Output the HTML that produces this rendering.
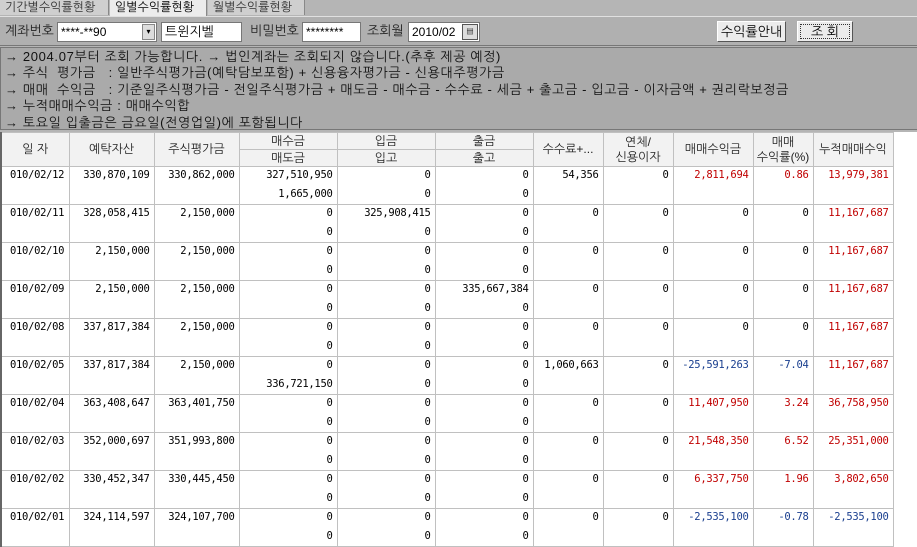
<!DOCTYPE html>
<html><head><meta charset="utf-8"><style>
*{margin:0;padding:0;box-sizing:border-box}
body{width:917px;height:542px;overflow:hidden;background:#fff;font-family:"Liberation Sans","NanumGothic","Noto Sans CJK KR",sans-serif;font-size:12px;color:#000;position:relative}
.abs{position:absolute}
#top{left:0;top:0;width:917px;height:132px;background:#b5b5b5}
.tab{position:absolute;top:0;height:15px;font-size:12px;line-height:14px;padding:0 5px;background:#cfcfcf;border-right:1px solid #888;color:#333}
.tab.on{background:#ececec;height:16px;color:#000}
#form{left:0;top:16px;width:917px;height:30px;background:#b0b0b0;border-top:1px solid #e0e0e0;border-bottom:1px solid #777}
.lbl{position:absolute;top:6px;font-size:13px;color:#222}
.inp{position:absolute;top:5px;height:20px;background:#fff;border:1px solid #777;font-size:12px;line-height:18px;padding-left:3px}
.btn{position:absolute;top:4px;height:21px;background:#ececec;border:1px solid #fff;border-right-color:#555;border-bottom-color:#555;font-size:13px;text-align:center;line-height:19px}
#info{left:0;top:47px;width:917px;height:83px;background:#aaa;border:1px solid #777;border-right:none;padding:1px 0 0 4px;font-size:13px;line-height:16.4px;color:#111;white-space:pre;letter-spacing:0.65px}
table{position:absolute;left:0;top:132px;border-collapse:collapse;table-layout:fixed;width:892px}
td{border-right:1px solid #c0c0c0;height:19px;padding:0 4px 0 0;text-align:right;vertical-align:top;font-family:"DejaVu Sans Mono","Liberation Mono",monospace;font-size:10.5px;line-height:17px;white-space:nowrap;overflow:hidden;letter-spacing:-0.3px}
td.d{border-left:2px solid #666;text-align:left;padding-left:8px}
tr.b td,td.s{border-bottom:1px solid #c0c0c0}
th{background:#f2f2f2;border:1px solid #c0c0c0;font-weight:normal;font-size:12px;height:17px;line-height:15px;color:#222}
th.f{border-left:2px solid #666}
.r{color:#c00000}.bl{color:#1a3f8f}
</style></head><body>
<div id="top" class="abs"></div>
<div class="tab" style="left:0;width:109px">기간별수익률현황</div>
<div class="tab on" style="left:110px;width:97px">일별수익률현황</div>
<div class="tab" style="left:208px;width:97px">월별수익률현황</div>
<div id="form" class="abs">
<span class="lbl" style="left:5px">계좌번호</span>
<div class="inp" style="left:57px;width:100px">****-**90<span style="position:absolute;right:1px;top:1px;width:13px;height:16px;background:#ddd;border:1px solid #888;font-size:8px;line-height:14px;text-align:center">▾</span></div>
<div class="inp" style="left:161px;width:81px;font-size:13px">트윈지벨</div>
<span class="lbl" style="left:250px">비밀번호</span>
<div class="inp" style="left:302px;width:59px">********</div>
<span class="lbl" style="left:367px">조회월</span>
<div class="inp" style="left:408px;width:72px">2010/02<span style="position:absolute;right:1px;top:1px;width:16px;height:16px;background:#ddd;border:1px solid #555;font-size:8px;line-height:14px;text-align:center">▤</span></div>
<div class="btn" style="left:717px;width:69px">수익률안내</div>
<div class="btn" style="left:797px;width:56px;outline:1px dotted #333;outline-offset:-4px">조 회</div>
</div>
<div id="info" class="abs">→ 2004.07부터 조회 가능합니다. → 법인계좌는 조회되지 않습니다.(추후 제공 예정)
→ 주식  평가금   : 일반주식평가금(예탁담보포함) + 신용융자평가금 - 신용대주평가금
→ 매매  수익금   : 기준일주식평가금 - 전일주식평가금 + 매도금 - 매수금 - 수수료 - 세금 + 출고금 - 입고금 - 이자금액 + 권리락보정금
→ 누적매매수익금 : 매매수익합
→ 토요일 입출금은 금요일(전영업일)에 포함됩니다</div>
<table>
<colgroup><col style="width:68px"><col style="width:85px"><col style="width:85px"><col style="width:98px"><col style="width:98px"><col style="width:98px"><col style="width:70px"><col style="width:70px"><col style="width:80px"><col style="width:60px"><col style="width:80px"></colgroup>
<tr><th rowspan="2" class="f">일 자</th><th rowspan="2">예탁자산</th><th rowspan="2">주식평가금</th><th>매수금</th><th>입금</th><th>출금</th><th rowspan="2">수수료+...</th><th rowspan="2">연체/<br>신용이자</th><th rowspan="2">매매수익금</th><th rowspan="2">매매<br>수익률(%)</th><th rowspan="2">누적매매수익</th></tr>
<tr><th>매도금</th><th>입고</th><th>출고</th></tr>
<tr><td rowspan="2" class="d s">010/02/12</td><td rowspan="2" class="s">330,870,109</td><td rowspan="2" class="s">330,862,000</td><td>327,510,950</td><td>0</td><td>0</td><td rowspan="2" class="s">54,356</td><td rowspan="2" class="s">0</td><td rowspan="2" class="r s">2,811,694</td><td rowspan="2" class="r s">0.86</td><td rowspan="2" class="r s">13,979,381</td></tr>
<tr class="b"><td>1,665,000</td><td>0</td><td>0</td></tr>
<tr><td rowspan="2" class="d s">010/02/11</td><td rowspan="2" class="s">328,058,415</td><td rowspan="2" class="s">2,150,000</td><td>0</td><td>325,908,415</td><td>0</td><td rowspan="2" class="s">0</td><td rowspan="2" class="s">0</td><td rowspan="2" class="s">0</td><td rowspan="2" class="s">0</td><td rowspan="2" class="r s">11,167,687</td></tr>
<tr class="b"><td>0</td><td>0</td><td>0</td></tr>
<tr><td rowspan="2" class="d s">010/02/10</td><td rowspan="2" class="s">2,150,000</td><td rowspan="2" class="s">2,150,000</td><td>0</td><td>0</td><td>0</td><td rowspan="2" class="s">0</td><td rowspan="2" class="s">0</td><td rowspan="2" class="s">0</td><td rowspan="2" class="s">0</td><td rowspan="2" class="r s">11,167,687</td></tr>
<tr class="b"><td>0</td><td>0</td><td>0</td></tr>
<tr><td rowspan="2" class="d s">010/02/09</td><td rowspan="2" class="s">2,150,000</td><td rowspan="2" class="s">2,150,000</td><td>0</td><td>0</td><td>335,667,384</td><td rowspan="2" class="s">0</td><td rowspan="2" class="s">0</td><td rowspan="2" class="s">0</td><td rowspan="2" class="s">0</td><td rowspan="2" class="r s">11,167,687</td></tr>
<tr class="b"><td>0</td><td>0</td><td>0</td></tr>
<tr><td rowspan="2" class="d s">010/02/08</td><td rowspan="2" class="s">337,817,384</td><td rowspan="2" class="s">2,150,000</td><td>0</td><td>0</td><td>0</td><td rowspan="2" class="s">0</td><td rowspan="2" class="s">0</td><td rowspan="2" class="s">0</td><td rowspan="2" class="s">0</td><td rowspan="2" class="r s">11,167,687</td></tr>
<tr class="b"><td>0</td><td>0</td><td>0</td></tr>
<tr><td rowspan="2" class="d s">010/02/05</td><td rowspan="2" class="s">337,817,384</td><td rowspan="2" class="s">2,150,000</td><td>0</td><td>0</td><td>0</td><td rowspan="2" class="s">1,060,663</td><td rowspan="2" class="s">0</td><td rowspan="2" class="bl s">-25,591,263</td><td rowspan="2" class="bl s">-7.04</td><td rowspan="2" class="r s">11,167,687</td></tr>
<tr class="b"><td>336,721,150</td><td>0</td><td>0</td></tr>
<tr><td rowspan="2" class="d s">010/02/04</td><td rowspan="2" class="s">363,408,647</td><td rowspan="2" class="s">363,401,750</td><td>0</td><td>0</td><td>0</td><td rowspan="2" class="s">0</td><td rowspan="2" class="s">0</td><td rowspan="2" class="r s">11,407,950</td><td rowspan="2" class="r s">3.24</td><td rowspan="2" class="r s">36,758,950</td></tr>
<tr class="b"><td>0</td><td>0</td><td>0</td></tr>
<tr><td rowspan="2" class="d s">010/02/03</td><td rowspan="2" class="s">352,000,697</td><td rowspan="2" class="s">351,993,800</td><td>0</td><td>0</td><td>0</td><td rowspan="2" class="s">0</td><td rowspan="2" class="s">0</td><td rowspan="2" class="r s">21,548,350</td><td rowspan="2" class="r s">6.52</td><td rowspan="2" class="r s">25,351,000</td></tr>
<tr class="b"><td>0</td><td>0</td><td>0</td></tr>
<tr><td rowspan="2" class="d s">010/02/02</td><td rowspan="2" class="s">330,452,347</td><td rowspan="2" class="s">330,445,450</td><td>0</td><td>0</td><td>0</td><td rowspan="2" class="s">0</td><td rowspan="2" class="s">0</td><td rowspan="2" class="r s">6,337,750</td><td rowspan="2" class="r s">1.96</td><td rowspan="2" class="r s">3,802,650</td></tr>
<tr class="b"><td>0</td><td>0</td><td>0</td></tr>
<tr><td rowspan="2" class="d s">010/02/01</td><td rowspan="2" class="s">324,114,597</td><td rowspan="2" class="s">324,107,700</td><td>0</td><td>0</td><td>0</td><td rowspan="2" class="s">0</td><td rowspan="2" class="s">0</td><td rowspan="2" class="bl s">-2,535,100</td><td rowspan="2" class="bl s">-0.78</td><td rowspan="2" class="bl s">-2,535,100</td></tr>
<tr class="b"><td>0</td><td>0</td><td>0</td></tr>
</table>
</body></html>
